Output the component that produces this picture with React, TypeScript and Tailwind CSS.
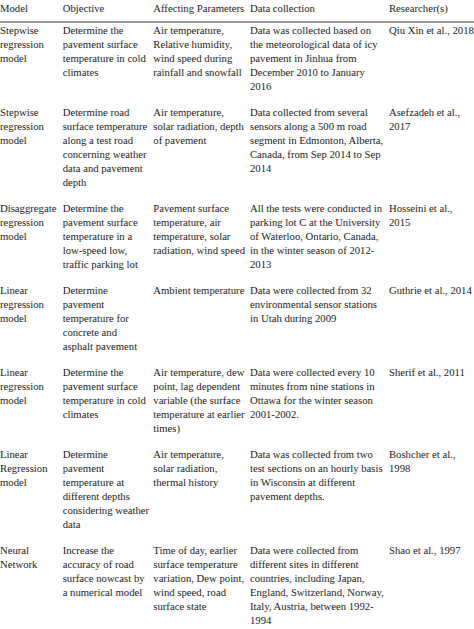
import React from "react";

type Row = string[][];

const rows: Row[] = [
  [
    ["Stepwise", "regression", "model"],
    ["Determine the", "pavement surface", "temperature in cold", "climates"],
    ["Air temperature,", "Relative humidity,", "wind speed during", "rainfall and snowfall"],
    ["Data was collected based on", "the meteorological data of icy", "pavement in Jinhua from", "December 2010 to January", "2016"],
    ["Qiu Xin et al., 2018"],
  ],
  [
    ["Stepwise", "regression", "model"],
    ["Determine road", "surface temperature", "along a test road", "concerning weather", "data and pavement", "depth"],
    ["Air temperature,", "solar radiation, depth", "of pavement"],
    ["Data collected from several", "sensors along a 500 m road", "segment in Edmonton, Alberta,", "Canada, from Sep 2014 to Sep", "2014"],
    ["Asefzadeh et al.,", "2017"],
  ],
  [
    ["Disaggregate", "regression", "model"],
    ["Determine the", "pavement surface", "temperature in a", "low-speed low,", "traffic parking lot"],
    ["Pavement surface", "temperature, air", "temperature, solar", "radiation, wind speed"],
    ["All the tests were conducted in", "parking lot C at the University", "of Waterloo, Ontario, Canada,", "in the winter season of 2012-", "2013"],
    ["Hosseini et al.,", "2015"],
  ],
  [
    ["Linear", "regression", "model"],
    ["Determine", "pavement", "temperature for", "concrete and", "asphalt pavement"],
    ["Ambient temperature"],
    ["Data were collected from 32", "environmental sensor stations", "in Utah during 2009"],
    ["Guthrie et al., 2014"],
  ],
  [
    ["Linear", "regression", "model"],
    ["Determine the", "pavement surface", "temperature in cold", "climates"],
    ["Air temperature, dew", "point, lag dependent", "variable (the surface", "temperature at earlier", "times)"],
    ["Data were collected every 10", "minutes from nine stations in", "Ottawa for the winter season", "2001-2002."],
    ["Sherif et al., 2011"],
  ],
  [
    ["Linear", "Regression", "model"],
    ["Determine", "pavement", "temperature at", "different depths", "considering weather", "data"],
    ["Air temperature,", "solar radiation,", "thermal history"],
    ["Data was collected from two", "test sections on an hourly basis", "in Wisconsin at different", "pavement depths."],
    ["Boshcher et al.,", "1998"],
  ],
  [
    ["Neural", "Network"],
    ["Increase the", "accuracy of road", "surface nowcast by", "a numerical model"],
    ["Time of day, earlier", "surface temperature", "variation, Dew point,", "wind speed, road", "surface state"],
    ["Data were collected from", "different sites in different", "countries, including Japan,", "England, Switzerland, Norway,", "Italy, Austria, between 1992-", "1994"],
    ["Shao et al., 1997"],
  ],
];

const headers = ["Model", "Objective", "Affecting Parameters", "Data collection", "Researcher(s)"];

const gridCols = "grid grid-cols-[62.7px_90.6px_96.7px_139px_1fr]";

function Cell({ lines }: { lines: string[] }) {
  return (
    <div className="whitespace-nowrap">
      {lines.map((l, i) => (
        <div key={i}>{l}</div>
      ))}
    </div>
  );
}

export default function App() {
  return (
    <div className="w-[474px] h-[629px] overflow-hidden bg-white text-[#1c1c1c] text-[10.7px] leading-[14px] font-['Liberation_Serif','Times_New_Roman',serif]">
      <div className={`${gridCols} pt-[1px] pb-[6px] border-b-2 border-[#9a9a9a]`}>
        {headers.map((h) => (
          <div key={h} className="whitespace-nowrap">
            {h}
          </div>
        ))}
      </div>
      {rows.map((r, i) => (
        <div key={i} className={`${gridCols} pb-[12px]`}>
          {r.map((c, j) => (
            <Cell key={j} lines={c} />
          ))}
        </div>
      ))}
    </div>
  );
}
